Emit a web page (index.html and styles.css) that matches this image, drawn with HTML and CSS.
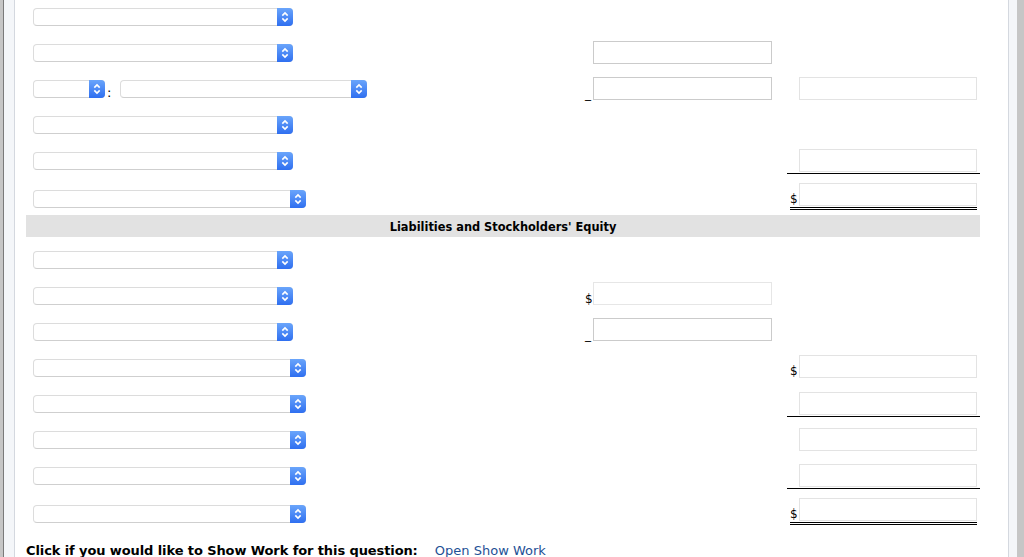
FILE: index.html
```html
<!DOCTYPE html>
<html lang="en">
<head>
  <meta charset="UTF-8" />
  <title>Balance Sheet</title>
  <link rel="stylesheet" href="styles.css">
</head>
<body>
  <div class="frame">
    <div class="panel">
      <div class="sheet">
        <!-- Assets -->
        <div class="row first">
          <div class="c1"><div class="select"><span class="arrows"></span></div></div>
        </div>
        <div class="row">
          <div class="c1"><div class="select"><span class="arrows"></span></div></div>
          <div class="c2"><span class="pre"></span><div class="field mid"></div></div>
        </div>
        <div class="row">
          <div class="c1 split">
            <div class="select small"><span class="arrows"></span></div>
            <span class="colon">:</span>
            <div class="select long"><span class="arrows"></span></div>
          </div>
          <div class="c2"><span class="pre">_</span><div class="field mid"></div></div>
          <div class="c3"><div class="amt"><span class="pre"></span><div class="field"></div></div></div>
        </div>
        <div class="row">
          <div class="c1"><div class="select"><span class="arrows"></span></div></div>
        </div>
        <div class="row">
          <div class="c1"><div class="select"><span class="arrows"></span></div></div>
          <div class="c3 line"><div class="amt"><span class="pre"></span><div class="field"></div></div></div>
        </div>
        <div class="row total">
          <div class="c1"><div class="select wide"><span class="arrows"></span></div></div>
          <div class="c3"><div class="amt double"><span class="pre">$</span><div class="field"></div></div></div>
        </div>

        <div class="heading">Liabilities and Stockholders' Equity</div>

        <div class="row">
          <div class="c1"><div class="select"><span class="arrows"></span></div></div>
        </div>
        <div class="row">
          <div class="c1"><div class="select"><span class="arrows"></span></div></div>
          <div class="c2 low"><span class="pre">$</span><div class="field mid faint"></div></div>
        </div>
        <div class="row">
          <div class="c1"><div class="select"><span class="arrows"></span></div></div>
          <div class="c2 low"><span class="pre">_</span><div class="field mid"></div></div>
        </div>
        <div class="row">
          <div class="c1"><div class="select wide"><span class="arrows"></span></div></div>
          <div class="c3 low"><div class="amt"><span class="pre">$</span><div class="field"></div></div></div>
        </div>
        <div class="row">
          <div class="c1"><div class="select wide"><span class="arrows"></span></div></div>
          <div class="c3 line"><div class="amt"><span class="pre"></span><div class="field"></div></div></div>
        </div>
        <div class="row">
          <div class="c1"><div class="select wide"><span class="arrows"></span></div></div>
          <div class="c3"><div class="amt"><span class="pre"></span><div class="field"></div></div></div>
        </div>
        <div class="row">
          <div class="c1"><div class="select wide"><span class="arrows"></span></div></div>
          <div class="c3 line"><div class="amt"><span class="pre"></span><div class="field"></div></div></div>
        </div>
        <div class="row total">
          <div class="c1"><div class="select wide"><span class="arrows"></span></div></div>
          <div class="c3"><div class="amt double"><span class="pre">$</span><div class="field"></div></div></div>
        </div>

        <div class="showwork">
          <b>Click if you would like to Show Work for this question:</b>
          <a href="#">Open Show Work</a>
        </div>
      </div>
    </div>
  </div>
</body>
</html>
```

FILE: styles.css
```css
html, body {
  margin: 0;
  height: 100%;
  overflow: hidden;
}
body {
  background: #c6c6c6;
  font-family: "DejaVu Sans", Verdana, sans-serif;
  color: #000;
}
.frame {
  margin-left: 3px;
  width: 1014px;
  height: 100%;
  border-left: 1px solid #7a7a7a;
  background: #f4f6f9;
  padding: 0 8px 0 10px;
  box-sizing: border-box;
}
.panel {
  height: 100%;
  background: #fff;
  border-left: 1px solid #d4d8df;
  border-right: 1px solid #d4d8df;
  padding-left: 11px;
}
.sheet {
  width: 954px;
}
.row {
  display: grid;
  grid-template-columns: 554px 207px 193px;
  height: 36px;
  align-items: end;
}
.row.first { height: 30px; }
.row.total { height: 38px; }

.c1 {
  grid-column: 1;
  padding: 0 0 4px 7px;
  display: flex;
  align-items: flex-end;
}
.colon {
  font-size: 13px;
  line-height: 10px;
  width: 15px;
  padding-left: 2px;
  box-sizing: border-box;
}
.c2 {
  grid-column: 2;
  padding: 0 0 2px 5px;
  display: flex;
  align-items: flex-end;
}
.c2.low { padding-bottom: 4px; }
.c3 {
  grid-column: 3;
  padding: 0 3px 2px;
}
.c3.low { padding-bottom: 3px; }
.c3.line {
  padding-bottom: 1px;
  border-bottom: 1px solid #000;
}
.amt {
  display: flex;
  align-items: flex-end;
}
.amt.double {
  padding-bottom: 1px;
  border-bottom: 3px double #000;
}
.amt .pre { margin-bottom: 1px; }
.pre {
  width: 9px;
  flex: none;
  font-size: 12px;
  line-height: 12px;
  text-align: left;
}
.c2 .pre { width: 8px; }

/* select boxes */
.select {
  position: relative;
  width: 260px;
  height: 18px;
  box-sizing: border-box;
  background: #fff;
  border: 1px solid #dcdcdc;
  border-bottom-color: #cfcfcf;
  border-radius: 4px;
}
.select.wide { width: 273px; }
.select.small { width: 72px; }
.select.long { width: 247px; }
.arrows {
  position: absolute;
  top: -1px;
  right: -1px;
  bottom: -1px;
  width: 16px;
  border-radius: 0 4px 4px 0;
  background-image:
    url("data:image/svg+xml;utf8,<svg xmlns='http://www.w3.org/2000/svg' width='16' height='18' viewBox='0 0 16 18'><path d='M5.3 7.6 8 4.9 10.7 7.6M5.3 10.4 8 13.1 10.7 10.4' fill='none' stroke='white' stroke-width='1.6'/></svg>"),
    linear-gradient(#6aa5fb, #2f6ff0);
}

/* text fields */
.field {
  height: 23px;
  width: 178px;
  box-sizing: border-box;
  border: 1px solid #e3e3e3;
  background: #fff;
}
.field.mid {
  width: 179px;
  border-color: #cbcbcb;
}
.field.mid.faint {
  border-color: #e6e6e6;
}

.heading {
  margin-top: 3px;
  height: 22px;
  background: #e2e2e2;
  text-align: center;
  font-size: 11.4px;
  font-weight: bold;
  line-height: 24px;
}

.showwork {
  padding-top: 15px;
  font-size: 13px;
  line-height: 18px;
}
.showwork b {
  margin-right: 13px;
  letter-spacing: -0.1px;
}
.showwork a {
  color: #1e5196;
  text-decoration: none;
}
```
